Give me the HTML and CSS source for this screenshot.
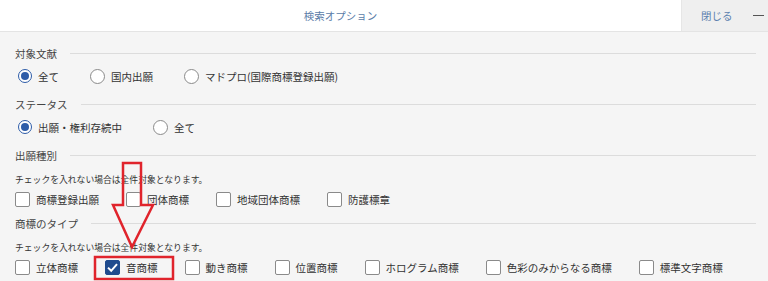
FILE: index.html
```html
<!DOCTYPE html>
<html lang="ja">
<head>
    <meta charset="UTF-8">
    <meta name="viewport" content="width=device-width, initial-scale=1.0">
    <title>検索オプション</title>
    <link rel="stylesheet" href="styles.css">
</head>
<body>

    <div class="header">
        <div class="header-title">検索オプション</div>
        <div class="header-close">
            <span class="close-text">閉じる</span>
            <span class="close-bar"></span>
        </div>
    </div>

    <div class="content">
        <div class="group group-radio">
            <div class="group-title">対象文献</div>
            <div class="options radios">
                <span class="opt"><span class="radio checked"></span>全て</span>
                <span class="opt"><span class="radio"></span>国内出願</span>
                <span class="opt"><span class="radio"></span>マドプロ(国際商標登録出願)</span>
            </div>
        </div>

        <div class="group group-radio">
            <div class="group-title">ステータス</div>
            <div class="options radios">
                <span class="opt"><span class="radio checked"></span>出願・権利存続中</span>
                <span class="opt"><span class="radio"></span>全て</span>
            </div>
        </div>

        <div class="group group-check">
            <div class="group-title">出願種別</div>
            <div class="note">チェックを入れない場合は全件対象となります。</div>
            <div class="options checks">
                <span class="opt"><span class="box"></span>商標登録出願</span>
                <span class="opt"><span class="box"></span>団体商標</span>
                <span class="opt"><span class="box"></span>地域団体商標</span>
                <span class="opt"><span class="box"></span>防護標章</span>
            </div>
        </div>

        <div class="group group-check">
            <div class="group-title">商標のタイプ</div>
            <div class="note">チェックを入れない場合は全件対象となります。</div>
            <div class="options checks">
                <span class="opt"><span class="box"></span>立体商標</span>
                <span class="opt"><span class="box checked">
                    <svg width="15" height="15" viewBox="0 0 15 15"><path d="M3 7.6 L6.2 10.8 L12 4.2" fill="none" stroke="#fff" stroke-width="2"/></svg>
                </span>音商標</span>
                <span class="opt"><span class="box"></span>動き商標</span>
                <span class="opt"><span class="box"></span>位置商標</span>
                <span class="opt"><span class="box"></span>ホログラム商標</span>
                <span class="opt"><span class="box"></span>色彩のみからなる商標</span>
                <span class="opt"><span class="box"></span>標準文字商標</span>
            </div>
        </div>
    </div>

    <!-- 注釈（赤い矢印と枠） -->
    <svg class="annotation" width="768" height="281" viewBox="0 0 768 281">
        <polygon points="123,163 141,163 141,205 153,205 132,247 113,205 123,205" fill="none" stroke="#e0242c" stroke-width="2.5"/>
        <rect x="95" y="257" width="78" height="22" fill="none" stroke="#e0242c" stroke-width="2.5"/>
    </svg>

</body>
</html>
```

FILE: styles.css
```css
body {
    margin: 0;
    padding: 0;
    position: relative;
    width: 768px;
    height: 281px;
    overflow: hidden;
    background-color: #f5f5f5;
    font-family: "Noto Sans CJK JP", "Noto Sans", sans-serif;
    font-size: 10.5px;
    color: #333;
}
.header {
    display: flex;
    height: 31px;
    background-color: #fff;
    border-bottom: 1px solid #e4e4e4;
}
.header-title {
    flex: 1;
    text-align: center;
    line-height: 31px;
    color: #5a7ca8;
}
.header-close {
    width: 86px;
    display: flex;
    align-items: center;
    background-color: #efefef;
    border-left: 1px solid #e6e6e6;
}
.close-text {
    margin-left: 19px;
    color: #5b7fae;
}
.close-bar {
    width: 11px;
    height: 1px;
    margin-left: 20px;
    background-color: #555;
}
.content {
    padding: 9px 12px 0 15px;
}
.group-title {
    display: flex;
    align-items: center;
    gap: 13px;
    height: 24px;
    color: #444;
}
.group-title::after {
    content: "";
    flex: 1;
    border-top: 1px solid #dcdcdc;
}
.group-radio {
    margin-bottom: 5px;
}
.group-check {
    margin-bottom: 4px;
}
.options {
    display: flex;
    align-items: center;
}
.radios {
    height: 22px;
    padding-left: 3px;
}
.radios .opt {
    margin-right: 31px;
}
.checks {
    height: 16px;
}
.checks .opt {
    margin-right: 27px;
}
.opt {
    display: flex;
    align-items: center;
    white-space: nowrap;
}
.note {
    height: 22px;
    line-height: 22px;
    margin-top: 2px;
    font-size: 8.8px;
    color: #333;
}
.radio {
    width: 13px;
    height: 13px;
    margin-right: 6px;
    border: 1px solid #8a8a8a;
    border-radius: 50%;
    background-color: #fff;
    position: relative;
}
.radio.checked {
    border: 1.5px solid #2d5ca8;
    width: 12px;
    height: 12px;
}
.radio.checked::after {
    content: "";
    position: absolute;
    left: 2px;
    top: 2px;
    width: 8px;
    height: 8px;
    border-radius: 50%;
    background-color: #2d5ca8;
}
.box {
    width: 13px;
    height: 13px;
    margin-right: 6px;
    border: 1px solid #8a8a8a;
    border-radius: 2px;
    background-color: #fff;
    display: flex;
}
.box.checked {
    background-color: #1f4b8e;
    border-color: #1f4b8e;
}
.box svg {
    margin: -1px;
}
.annotation {
    position: absolute;
    top: 0;
    left: 0;
    pointer-events: none;
}
```
